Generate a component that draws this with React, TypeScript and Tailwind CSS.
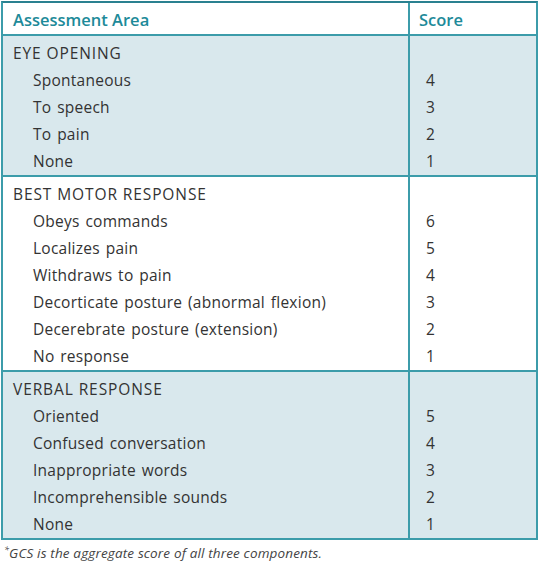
import React from 'react'

type Section = {
  title: string
  shaded: boolean
  items: [string, number][]
}

const sections: Section[] = [
  {
    title: 'EYE OPENING',
    shaded: true,
    items: [
      ['Spontaneous', 4],
      ['To speech', 3],
      ['To pain', 2],
      ['None', 1],
    ],
  },
  {
    title: 'BEST MOTOR RESPONSE',
    shaded: false,
    items: [
      ['Obeys commands', 6],
      ['Localizes pain', 5],
      ['Withdraws to pain', 4],
      ['Decorticate posture (abnormal flexion)', 3],
      ['Decerebrate posture (extension)', 2],
      ['No response', 1],
    ],
  },
  {
    title: 'VERBAL RESPONSE',
    shaded: true,
    items: [
      ['Oriented', 5],
      ['Confused conversation', 4],
      ['Inappropriate words', 3],
      ['Incomprehensible sounds', 2],
      ['None', 1],
    ],
  },
]

export default function App() {
  return (
    <div className="w-[540px] h-[564px] bg-white pt-px pl-px font-['Open_Sans',sans-serif] text-[#333]">
      <div className="w-[537px] border-2 border-[#3c9caa] border-t-[#2a8190]">
        <div className="grid grid-cols-[405px_1fr] h-[33px] border-b-2 border-[#3c9caa] text-[16.5px] font-semibold text-[#1d8a99]">
          <div className="pl-[10px] pt-[4px] flex items-center">Assessment Area</div>
          <div className="pl-[9px] pt-[4px] flex items-center border-l-2 border-[#3c9caa]">Score</div>
        </div>
        {sections.map((s, i) => (
          <div
            key={s.title}
            className={`grid grid-cols-[405px_1fr] text-[15.5px] ${s.shaded ? 'bg-[#d9e8ed]' : 'bg-white'} ${i > 0 ? 'border-t-2 border-[#3c9caa]' : ''}`}
          >
            <div className="py-[2px]">
              <div className="h-[27px] pt-[5px] flex items-center pl-[10px] tracking-[0.9px]">{s.title}</div>
              {s.items.map(([label]) => (
                <div key={label} className="h-[27px] pt-[5px] flex items-center pl-[30px] tracking-[0.25px] [word-spacing:1.5px]">
                  {label}
                </div>
              ))}
            </div>
            <div className="py-[2px] border-l-2 border-[#3c9caa]">
              <div className="h-[27px]"></div>
              {s.items.map(([label, score]) => (
                <div key={label} className="h-[27px] pt-[5px] flex items-center pl-[16px]">{score}</div>
              ))}
            </div>
          </div>
        ))}
      </div>
      <p className="mt-[3px] pl-[3px] text-[13.5px] italic text-[#444] tracking-[0.15px]">
        <span className="text-[9px] align-top">*</span>GCS is the aggregate score of all three components.
      </p>
    </div>
  )
}
